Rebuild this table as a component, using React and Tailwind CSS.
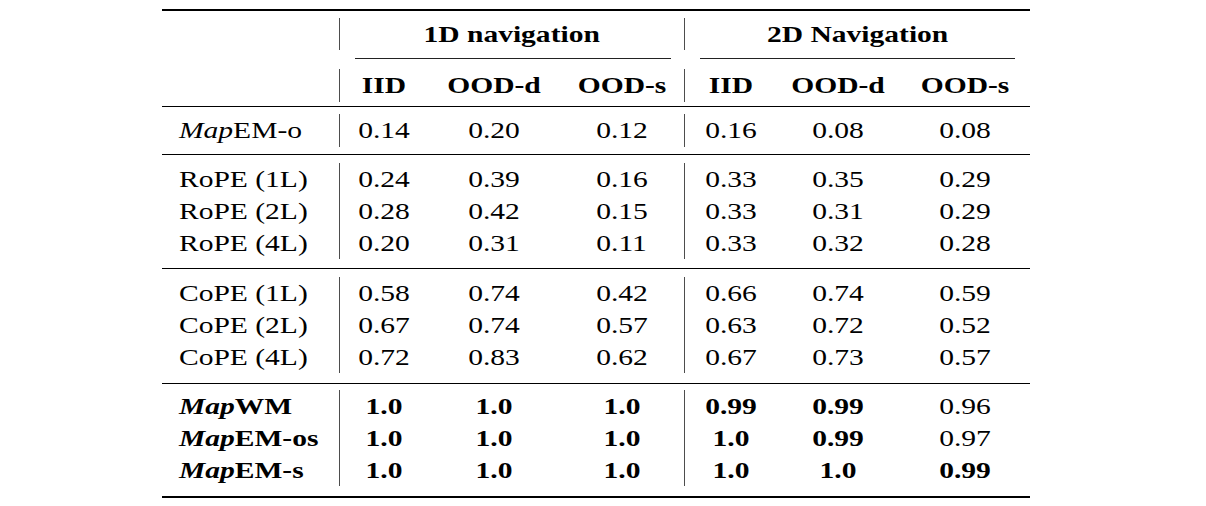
const colWidths = ["w-[88px]", "w-[132px]", "w-[124px]", "w-[92px]", "w-[122px]", "w-[131px]"];
const heads = ["IID", "OOD-d", "OOD-s", "IID", "OOD-d", "OOD-s"];

// each value: [text, bold]
const groups = [
    {
        pad: "pt-[7px] pb-[7px]",
        line: "h-[33px] leading-[33px]",
        rows: [
            { map: "Map", rest: "EM-o", vals: [["0.14"], ["0.20"], ["0.12"], ["0.16"], ["0.08"], ["0.08"]] },
        ],
    },
    {
        pad: "pt-2 pb-[9px]",
        line: "h-8 leading-8",
        rows: [
            { label: "RoPE (1L)", vals: [["0.24"], ["0.39"], ["0.16"], ["0.33"], ["0.35"], ["0.29"]] },
            { label: "RoPE (2L)", vals: [["0.28"], ["0.42"], ["0.15"], ["0.33"], ["0.31"], ["0.29"]] },
            { label: "RoPE (4L)", vals: [["0.20"], ["0.31"], ["0.11"], ["0.33"], ["0.32"], ["0.28"]] },
        ],
    },
    {
        pad: "pt-2 pb-[10px]",
        line: "h-8 leading-8",
        rows: [
            { label: "CoPE (1L)", vals: [["0.58"], ["0.74"], ["0.42"], ["0.66"], ["0.74"], ["0.59"]] },
            { label: "CoPE (2L)", vals: [["0.67"], ["0.74"], ["0.57"], ["0.63"], ["0.72"], ["0.52"]] },
            { label: "CoPE (4L)", vals: [["0.72"], ["0.83"], ["0.62"], ["0.67"], ["0.73"], ["0.57"]] },
        ],
    },
    {
        pad: "pt-[6px] pb-[10px]",
        line: "h-8 leading-8",
        rows: [
            { map: "Map", rest: "WM", bold: true, vals: [["1.0", 1], ["1.0", 1], ["1.0", 1], ["0.99", 1], ["0.99", 1], ["0.96"]] },
            { map: "Map", rest: "EM-os", bold: true, vals: [["1.0", 1], ["1.0", 1], ["1.0", 1], ["1.0", 1], ["0.99", 1], ["0.97"]] },
            { map: "Map", rest: "EM-s", bold: true, vals: [["1.0", 1], ["1.0", 1], ["1.0", 1], ["1.0", 1], ["1.0", 1], ["0.99", 1]] },
        ],
    },
];

const Bar = () => <div className="w-px bg-[#4d4d4d]" />;
const Rule = ({ h = "h-px" }) => <div className={`${h} bg-black`} />;

const Label = ({ row }) => {
    if (row.map) {
        return (
            <span className={`inline-block origin-left scale-x-[1.23] whitespace-nowrap ${row.bold ? "font-bold" : ""}`}>
                <i>{row.map}</i>
                {row.rest}
            </span>
        );
    }
    return <span className="inline-block origin-left scale-x-[1.23] whitespace-nowrap">{row.label}</span>;
};

const Group = ({ group }) => {
    return (
        <div className={`flex ${group.pad}`}>
            <div className="w-[177px] pl-[17px]">
                {group.rows.map((row, i) => (
                    <div key={i} className={group.line}>
                        <Label row={row} />
                    </div>
                ))}
            </div>
            {colWidths.map((w, c) => (
                <div key={c} className="flex">
                    {c === 0 || c === 3 ? <Bar /> : null}
                    <div className={`${w} text-center`}>
                        {group.rows.map((row, i) => (
                            <div key={i} className={group.line}>
                                <span className={`inline-block scale-x-[1.23] ${row.vals[c][1] ? "font-bold" : ""}`}>
                                    {row.vals[c][0]}
                                </span>
                            </div>
                        ))}
                    </div>
                </div>
            ))}
        </div>
    );
};

export default function App() {
    return (
        <div className="w-[1206px] h-[506px] bg-white pl-[162px] pt-[9px] text-black font-['Liberation_Serif',serif] text-[24px]">
            <div className="w-[868px]">
                <Rule h="h-[2px]" />

                {/* spanning headers */}
                <div className="flex pt-[7px] pb-[8px] font-bold">
                    <div className="w-[177px]" />
                    <Bar />
                    <div className="w-[344px] h-8 leading-8 text-center">
                        <span className="inline-block scale-x-[1.23]">1D navigation</span>
                    </div>
                    <Bar />
                    <div className="w-[345px] h-8 leading-8 text-center">
                        <span className="inline-block scale-x-[1.23]">2D Navigation</span>
                    </div>
                </div>

                <div className="flex">
                    <div className="w-[178px]" />
                    <div className="w-[344px] pl-[15px] pr-[13px]">
                        <div className="h-px bg-[#222]" />
                    </div>
                    <div className="w-[346px] pl-[16px] pr-[15px]">
                        <div className="h-px bg-[#222]" />
                    </div>
                </div>

                <div className="flex pt-[10px] pb-1 font-bold">
                    <div className="w-[177px]" />
                    {colWidths.map((w, c) => (
                        <div key={c} className="flex">
                            {c === 0 || c === 3 ? <Bar /> : null}
                            <div className={`${w} h-[33px] leading-[33px] text-center`}>
                                <span className="inline-block scale-x-[1.23]">{heads[c]}</span>
                            </div>
                        </div>
                    ))}
                </div>

                {groups.map((g, i) => (
                    <div key={i}>
                        <Rule />
                        <Group group={g} />
                    </div>
                ))}

                <Rule h="h-[2px]" />
            </div>
        </div>
    );
}
